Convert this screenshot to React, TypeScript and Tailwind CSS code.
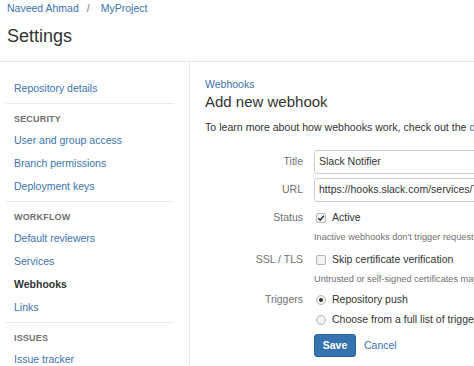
import React from "react";

const link = "text-[#3b73af]";

const Check = ({ checked }: { checked?: boolean }) => (
  <span className="flex h-[10px] w-[10px] shrink-0 items-center justify-center rounded-[2px] border border-[#b5b5b5] bg-[#f4f4f4]">
    {checked && (
      <svg width="8" height="8" viewBox="0 0 10 10">
        <path d="M1.5 5.2L4 7.6L8.6 2.2" fill="none" stroke="#333" strokeWidth="1.8" />
      </svg>
    )}
  </span>
);

const Radio = ({ checked }: { checked?: boolean }) => (
  <span className="flex h-[10px] w-[10px] shrink-0 items-center justify-center rounded-full border border-[#b5b5b5] bg-[#f2f2f2]">
    {checked && <span className="h-[4px] w-[4px] rounded-full bg-[#333]" />}
  </span>
);

const Separator = () => <div className="mt-[3px] border-t border-[#ebebeb]" />;

const Heading = ({ children }: { children: React.ReactNode }) => (
  <div className="mb-[1px] mt-[4px] flex h-[20px] items-center pl-[8px] pt-[3px] text-[9px] font-bold tracking-[0.02em] text-[#707070]">
    {children}
  </div>
);

const Item = ({ children, active }: { children: React.ReactNode; active?: boolean }) => (
  <div
    className={`flex h-[23px] items-center pl-[8px] ${
      active ? "font-bold text-[#333]" : link
    }`}
  >
    {children}
  </div>
);

const Label = ({ children }: { children: React.ReactNode }) => (
  <div className="w-[98px] shrink-0 text-right text-[#707070]">{children}</div>
);

export default function App() {
  return (
    <div
      className="h-[366px] w-[474px] overflow-hidden whitespace-nowrap bg-white text-[10.5px] text-[#333]"
      style={{ fontFamily: '"Liberation Sans", Arial, sans-serif' }}
    >
      {/* Header */}
      <div className="h-[62px] border-b border-[#e6e6e6] px-[7px] pt-[2px]">
        <div className="flex h-[14px] items-center gap-[8px]">
          <span className={link}>Naveed Ahmad</span>
          <span className="text-[#707070]">/</span>
          <span className={`${link} ml-[3px]`}>MyProject</span>
        </div>
        <div className="mt-[9px] h-[22px] text-[18px] leading-[22px] text-[#333]">Settings</div>
      </div>

      <div className="flex">
        {/* Sidebar */}
        <div className="h-[310px] w-[190px] shrink-0 border-r border-[#e9e9e9] pl-[6px] pr-[15px] pt-[15px]">
          <Item>Repository details</Item>
          <Separator />
          <Heading>SECURITY</Heading>
          <Item>User and group access</Item>
          <Item>Branch permissions</Item>
          <Item>Deployment keys</Item>
          <Separator />
          <Heading>WORKFLOW</Heading>
          <Item>Default reviewers</Item>
          <Item>Services</Item>
          <Item active>Webhooks</Item>
          <Item>Links</Item>
          <Separator />
          <Heading>ISSUES</Heading>
          <Item>Issue tracker</Item>
        </div>

        {/* Main */}
        <div className="min-w-0 flex-1 pl-[15px] pt-[15px]">
          <div className={`h-[14px] leading-[14px] ${link}`}>Webhooks</div>
          <div className="mt-[1px] h-[20px] text-[15px] leading-[20px]">Add new webhook</div>
          <div className="mt-[8px] h-[14px] text-[10.6px] leading-[14px]">
            To learn more about how webhooks work, check out the{" "}
            <span className={link}>documentation</span>.
          </div>

          <div className="mt-[16px] flex items-center gap-[11px]">
            <Label>Title</Label>
            <div className="flex h-[24px] w-[260px] shrink-0 items-center rounded-[3px] border border-[#cccccc] pl-[4px]">
              Slack Notifier
            </div>
          </div>
          <div className="mt-[4px] flex items-center gap-[11px]">
            <Label>URL</Label>
            <div className="flex h-[24px] w-[260px] shrink-0 items-center rounded-[3px] border border-[#cccccc] pl-[4px]">
              https://hooks.slack.com/services/T00000000/B00000000
            </div>
          </div>

          <div className="mt-[6px] flex h-[20px] items-center gap-[11px]">
            <Label>Status</Label>
            <div className="flex items-center gap-[6px] pl-[2px]">
              <Check checked />
              <span>Active</span>
            </div>
          </div>
          <div className="mt-[2px] flex h-[16px] items-center pl-[109px] text-[9.2px] text-[#707070]">
            Inactive webhooks don't trigger requests.
          </div>

          <div className="mt-[4px] flex h-[20px] items-center gap-[11px]">
            <Label>SSL / TLS</Label>
            <div className="flex items-center gap-[6px] pl-[2px]">
              <Check />
              <span>Skip certificate verification</span>
            </div>
          </div>
          <div className="mt-[2px] flex h-[16px] items-center pl-[109px] text-[9.2px] text-[#707070]">
            Untrusted or self-signed certificates may be accepted.
          </div>

          <div className="mt-[2px] flex h-[20px] items-center gap-[11px]">
            <Label>Triggers</Label>
            <div className="flex items-center gap-[6px] pl-[2px]">
              <Radio checked />
              <span>Repository push</span>
            </div>
          </div>
          <div className="flex h-[20px] items-center gap-[6px] pl-[111px]">
            <Radio />
            <span>Choose from a full list of triggers</span>
          </div>

          <div className="mt-[4px] flex items-center gap-[8px] pl-[109px]">
            <button className="flex h-[23px] w-[42px] items-center justify-center rounded-[3px] border border-[#2a65a0] bg-[#3572b0] font-bold text-white">
              Save
            </button>
            <span className={link}>Cancel</span>
          </div>
        </div>
      </div>
    </div>
  );
}
